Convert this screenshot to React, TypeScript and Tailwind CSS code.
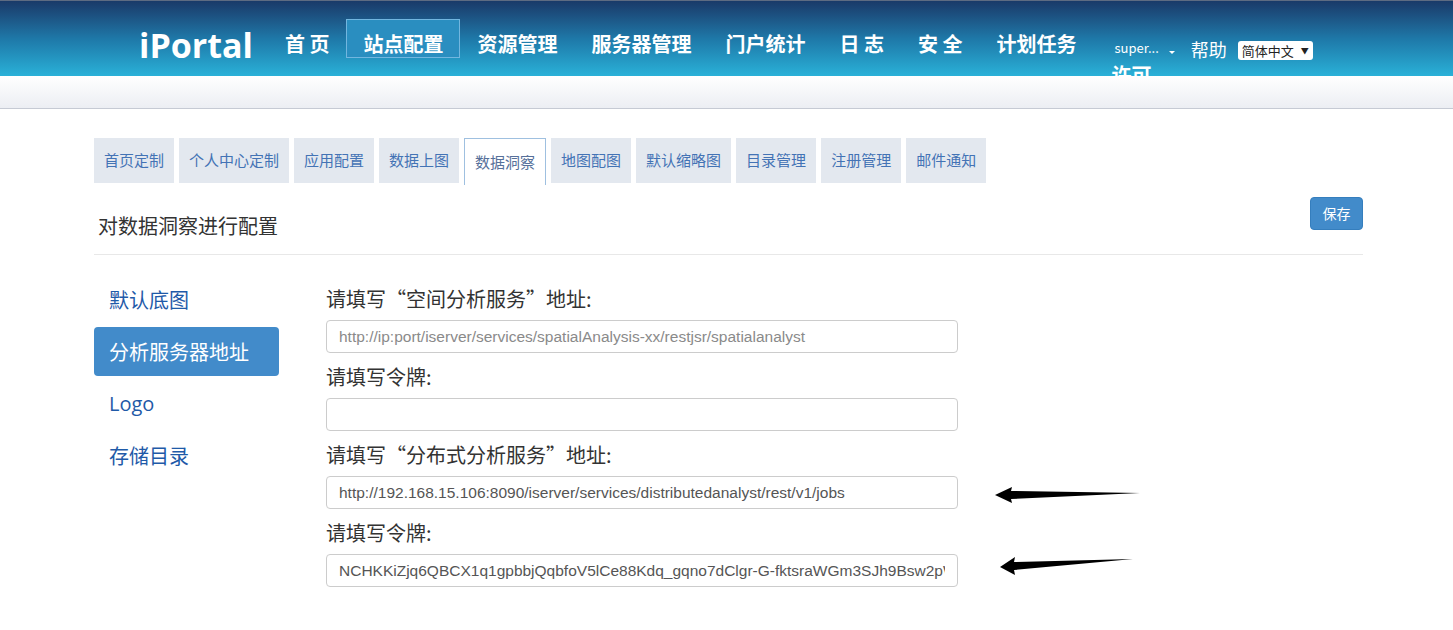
import React from "react";

const NAV = ["首 页", "站点配置", "资源管理", "服务器管理", "门户统计", "日 志", "安 全", "计划任务"];

const TABS = ["首页定制", "个人中心定制", "应用配置", "数据上图", "数据洞察", "地图配图", "默认缩略图", "目录管理", "注册管理", "邮件通知"];

const SIDE = ["默认底图", "分析服务器地址", "Logo", "存储目录"];

const cjk = "font-['Noto_Sans_CJK_SC',sans-serif]";

function Field({ label, value, placeholder }: { label: string; value?: string; placeholder?: string }) {
  return (
    <div>
      <div className="mt-[10px] mb-[7px] text-[20px] leading-[28px] text-[#333]">{label}</div>
      <input
        readOnly
        value={value ?? ""}
        placeholder={placeholder}
        className="block h-[33px] w-[632px] rounded-[4px] border border-[#ccc] bg-white px-[12px] font-['Liberation_Sans',sans-serif] text-[15.5px] text-[#555] outline-none placeholder:text-[#8a8a8a]"
      />
    </div>
  );
}

function Arrows() {
  // the two hand-drawn arrows pointing at the inputs
  return (
    <svg className="absolute left-[990px] top-[480px] h-[100px] w-[160px]" viewBox="0 0 160 100">
      <polygon points="5,15 22,7 21,11 150,13 21,19 22,23" fill="#000" />
      <polygon points="10,87 25,77 24,82 143,79 24,90 25,95" fill="#000" />
    </svg>
  );
}

export default function App() {
  return (
    <div lang="zh-CN" className={`relative min-h-[630px] w-full bg-white ${cjk}`}>
      <header className="h-[76px] overflow-hidden border-t border-[#5d6b82] bg-gradient-to-b from-[#193a69] via-[#1e78a8] to-[#2ab1d8]">
        <div className="flex h-full items-center pl-[139px]">
          <div className="mr-[15px] mt-[12px] font-['Open_Sans',sans-serif] text-[34px] font-bold leading-none text-white">iPortal</div>
          <nav className="flex items-center">
            {NAV.map((n) => (
              <div
                key={n}
                className={
                  n === "站点配置"
                    ? "flex h-[39px] items-end border border-[#72b6df] bg-[#2a8ec0] px-[16px] pb-[1px] text-[20px] font-bold leading-[24px] text-white"
                    : "flex h-[39px] items-end border border-transparent px-[16px] pb-[1px] text-[20px] font-bold leading-[24px] text-white"
                }
              >
                {n}
              </div>
            ))}
          </nav>
          <div className="ml-[18px] mt-[38px] flex flex-col self-start">
            <div className="flex h-[18px] items-center gap-[10px] pl-[3px] text-[13px] text-white">
              <span>super...</span>
              <span className="mt-[8px] h-0 w-0 border-x-[3px] border-t-[3px] border-x-transparent border-t-white" />
            </div>
            <div className="mt-[4px] text-[20px] font-bold leading-[28px] text-white">许可</div>
          </div>
          <div className="ml-[16px] mt-[36px] self-start text-[18px] leading-[24px] text-white">帮助</div>
          <div className="ml-[11px] mt-[40px] flex h-[19px] w-[75px] items-center justify-between self-start rounded-[3px] bg-white px-[4px] text-[13px] text-[#222]">
            <span>简体中文</span>
            <span className="text-[8px]">▼</span>
          </div>
        </div>
      </header>
      <div className="h-[33px] border-b border-[#c6cad4] bg-gradient-to-b from-white to-[#eceef3]" />

      <div className="ml-[94px] w-[1269px] pt-[29px]">
        <div className="flex gap-[5px]">
          {TABS.map((t) =>
            t === "数据洞察" ? (
              <div key={t} className="flex h-[47px] items-center border border-b-0 border-[#9fc0e0] bg-white px-[10px] text-[15px] text-[#56709a]">
                {t}
              </div>
            ) : (
              <div key={t} className="flex h-[45px] items-center bg-[#e3e8ef] px-[10px] text-[15px] text-[#4373b5]">
                {t}
              </div>
            )
          )}
        </div>

        <div className="flex items-start justify-between border-b border-[#e8e8e8] pb-[13px]">
          <div className="pl-[4px] pt-[26px] text-[20px] leading-[30px] text-[#333]">对数据洞察进行配置</div>
          <button className="mt-[12px] h-[33px] w-[53px] rounded-[4px] border border-[#357ebd] bg-[#428bca] text-[14px] text-white">
            保存
          </button>
        </div>

        <div className="flex pt-[20px]">
          <div className="w-[185px]">
            {SIDE.map((s) => (
              <div
                key={s}
                className={
                  s === "分析服务器地址"
                    ? "mb-[3px] flex h-[49px] items-center rounded-[4px] bg-[#428bca] px-[15px] text-[20px] text-white"
                    : s === "Logo"
                    ? "mb-[3px] flex h-[49px] items-center px-[15px] font-['Open_Sans',sans-serif] text-[20px] text-[#1f5aa8]"
                    : "mb-[3px] flex h-[49px] items-center px-[15px] text-[20px] text-[#1f5aa8]"
                }
              >
                {s}
              </div>
            ))}
          </div>
          <div className="ml-[47px]">
            <Field label="请填写“空间分析服务”地址:" placeholder="http://ip:port/iserver/services/spatialAnalysis-xx/restjsr/spatialanalyst" />
            <Field label="请填写令牌:" />
            <Field label="请填写“分布式分析服务”地址:" value="http://192.168.15.106:8090/iserver/services/distributedanalyst/rest/v1/jobs" />
            <Field label="请填写令牌:" value="NCHKKiZjq6QBCX1q1gpbbjQqbfoV5lCe88Kdq_gqno7dClgr-G-fktsraWGm3SJh9Bsw2pWeHk" />
          </div>
        </div>
      </div>
      <Arrows />
    </div>
  );
}
